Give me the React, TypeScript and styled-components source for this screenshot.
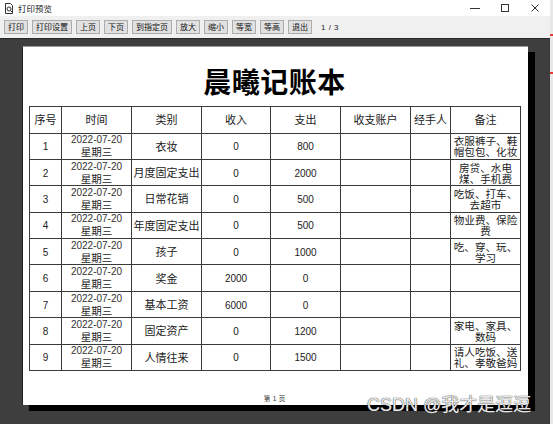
import React from 'react';
import styled, { createGlobalStyle } from 'styled-components';

const GlobalStyle = createGlobalStyle`
  html, body {
    margin: 0;
    padding: 0;
    width: 553px;
    height: 424px;
    overflow: hidden;
    background: #e6e6e6;
  }
  * {
    box-sizing: border-box;
  }
`;

const CJK = `"Noto Sans CJK SC", "Liberation Sans", sans-serif`;
const NUM = `"Liberation Sans", "Noto Sans CJK SC", sans-serif`;

const Screen = styled.div`
  position: relative;
  display: flex;
  width: 553px;
  height: 424px;
`;

const Window = styled.div`
  width: 550px;
  height: 424px;
  display: flex;
  flex-direction: column;
  background: #3e3e3e;
`;

const Edge = styled.div`
  position: relative;
  width: 3px;
  height: 424px;
  background: #e8e8e8;
`;

const Tick = styled.div<{ $top: number }>`
  position: absolute;
  left: 0;
  top: ${(p) => p.$top}px;
  width: 3px;
  height: 2px;
  background: #e53935;
`;

const TitleBar = styled.div`
  height: 16px;
  display: flex;
  align-items: center;
  background: #fff;
  padding-left: 4px;
`;

const TitleText = styled.span`
  font-family: ${CJK};
  font-size: 8.5px;
  color: #222;
  margin-left: 4px;
`;

const Controls = styled.div`
  margin-left: auto;
  display: flex;
  height: 16px;
`;

const Ctrl = styled.div`
  width: 30px;
  display: flex;
  align-items: center;
  justify-content: center;
`;

const Toolbar = styled.div`
  height: 23px;
  display: flex;
  align-items: center;
  gap: 4px;
  padding-left: 4px;
  background: #f0f0f0;
  border-bottom: 1px solid #2a2a2a;
`;

const ToolButton = styled.button`
  height: 14px;
  padding: 0 3px;
  border: 1px solid #adadad;
  background: #e1e1e1;
  font-family: ${CJK};
  font-size: 8px;
  line-height: 12px;
  color: #111;
  margin: 0;
`;

const PageInfo = styled.span`
  font-family: ${NUM};
  font-size: 8px;
  color: #222;
  margin-left: 5px;
  word-spacing: 1px;
`;

const Viewport = styled.div`
  flex: 1;
  padding: 7px 0 0 22px;
`;

const Page = styled.div`
  width: 506px;
  height: 359px;
  background: #fff;
  border-left: 1px solid #222;
  border-top: 1px solid #9a9a9a;
  box-shadow: 7px 6px 0 #000;
  display: flex;
  flex-direction: column;
  padding: 0 8px 0 6px;
`;

const Heading = styled.div`
  height: 59px;
  padding-top: 8px;
  display: flex;
  align-items: center;
  justify-content: center;
  font-family: ${CJK};
  font-weight: 700;
  font-size: 28px;
  color: #000;
  letter-spacing: 0.5px;
`;

const Table = styled.table`
  width: 491px;
  border-collapse: collapse;
  table-layout: fixed;
`;

const Row = styled.tr<{ $h: number }>`
  height: ${(p) => p.$h}px;
`;

const Cell = styled.td<{ $wrap?: boolean }>`
  border: 1px solid #3a3a3a;
  padding: 0 1px;
  text-align: center;
  vertical-align: middle;
  font-family: ${CJK};
  font-size: ${(p) => (p.$wrap ? '10.6px' : '11px')};
  line-height: ${(p) => (p.$wrap ? '11px' : '13px')};
  color: #222;
  overflow: hidden;
`;

const HeadCell = styled(Cell).attrs({ as: 'th' })`
  font-weight: 400;
`;

const Num = styled.span`
  font-family: ${NUM};
  font-size: 10px;
`;

const DateText = styled.div`
  font-family: ${NUM};
  font-size: 10px;
  line-height: 11px;
  color: #333;
`;

const Weekday = styled.div`
  font-family: ${CJK};
  font-size: 10.5px;
  line-height: 13px;
`;

const Footer = styled.div`
  margin-top: auto;
  height: 14px;
  display: flex;
  align-items: center;
  justify-content: center;
  font-family: ${CJK};
  font-size: 6.5px;
  color: #333;
  word-spacing: 1px;
`;

const Watermark = styled.div`
  position: absolute;
  left: 367px;
  top: 390px;
  font-family: ${NUM};
  font-size: 18px;
  color: rgba(255, 255, 255, 0.9);
  text-shadow: 0 0 1px #444, 0 0 1px #444;
  white-space: nowrap;
`;

const cols = [32, 70, 70, 69, 70, 70, 40, 70];
const heads = ['序号', '时间', '类别', '收入', '支出', '收支账户', '经手人', '备注'];

const rows: [string, string, string, string][] = [
  ['衣妆', '0', '800', '衣服裤子、鞋帽包包、化妆'],
  ['月度固定支出', '0', '2000', '房贷、水电煤、手机费'],
  ['日常花销', '0', '500', '吃饭、打车、去超市'],
  ['年度固定支出', '0', '500', '物业费、保险费'],
  ['孩子', '0', '1000', '吃、穿、玩、学习'],
  ['奖金', '2000', '0', ''],
  ['基本工资', '6000', '0', ''],
  ['固定资产', '0', '1200', '家电、家具、数码'],
  ['人情往来', '0', '1500', '请人吃饭、送礼、孝敬爸妈'],
];

const toolButtons = ['打印', '打印设置', '上页', '下页', '到指定页', '放大', '缩小', '等宽', '等高', '退出'];

function PreviewIcon() {
  return (
    <svg width="10" height="11" viewBox="0 0 10 11" fill="none" stroke="#333" strokeWidth="1">
      <path d="M1.5 0.5h5l2 2v8h-7z" />
      <circle cx="5" cy="6" r="2" />
      <path d="M6.5 7.5l2 2" />
    </svg>
  );
}

export default function App() {
  return (
    <>
      <GlobalStyle />
      <Screen>
        <Window>
          <TitleBar>
            <PreviewIcon />
            <TitleText>打印预览</TitleText>
            <Controls>
              <Ctrl>
                <svg width="10" height="10" viewBox="0 0 10 10">
                  <path d="M0 5.5h10" stroke="#333" strokeWidth="1" />
                </svg>
              </Ctrl>
              <Ctrl>
                <svg width="10" height="10" viewBox="0 0 10 10">
                  <rect x="1.5" y="1.5" width="7" height="7" fill="none" stroke="#333" strokeWidth="1" />
                </svg>
              </Ctrl>
              <Ctrl>
                <svg width="10" height="10" viewBox="0 0 10 10">
                  <path d="M1.5 1.5l7 7M8.5 1.5l-7 7" stroke="#333" strokeWidth="1" />
                </svg>
              </Ctrl>
            </Controls>
          </TitleBar>
          <Toolbar>
            {toolButtons.map((b) => (
              <ToolButton key={b}>{b}</ToolButton>
            ))}
            <PageInfo>1 / 3</PageInfo>
          </Toolbar>
          <Viewport>
            <Page>
              <Heading>晨曦记账本</Heading>
              <Table>
                <colgroup>
                  {cols.map((w, i) => (
                    <col key={i} style={{ width: w }} />
                  ))}
                </colgroup>
                <thead>
                  <Row $h={26.5}>
                    {heads.map((h) => (
                      <HeadCell key={h}>{h}</HeadCell>
                    ))}
                  </Row>
                </thead>
                <tbody>
                  {rows.map(([kind, income, expense, note], i) => (
                    <Row $h={26.4} key={i}>
                      <Cell>
                        <Num>{i + 1}</Num>
                      </Cell>
                      <Cell>
                        <DateText>2022-07-20</DateText>
                        <Weekday>星期三</Weekday>
                      </Cell>
                      <Cell>{kind}</Cell>
                      <Cell>
                        <Num>{income}</Num>
                      </Cell>
                      <Cell>
                        <Num>{expense}</Num>
                      </Cell>
                      <Cell />
                      <Cell />
                      <Cell $wrap>{note}</Cell>
                    </Row>
                  ))}
                </tbody>
              </Table>
              <Footer>第 1 页</Footer>
            </Page>
          </Viewport>
        </Window>
        <Edge>
          <Tick $top={34} />
          <Tick $top={72} />
        </Edge>
        <Watermark>CSDN @我才是逗逗</Watermark>
      </Screen>
    </>
  );
}
